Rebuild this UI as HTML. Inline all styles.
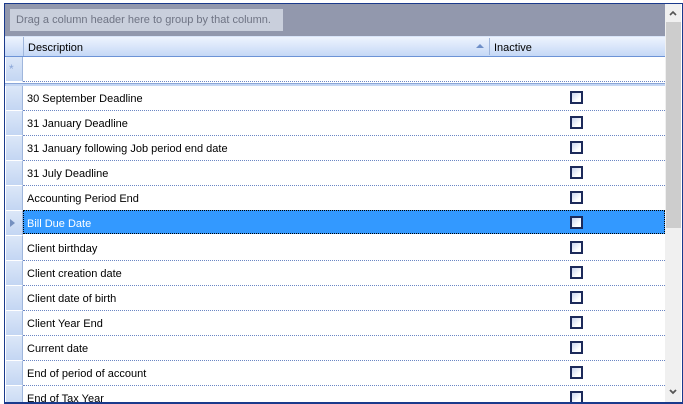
<!DOCTYPE html>
<html><head><style>
*{margin:0;padding:0;box-sizing:border-box}
html,body{width:683px;height:404px;overflow:hidden}
body{background:#fff;position:relative;font-family:"Liberation Sans",sans-serif;font-size:11px}
.a{position:absolute}
.rh{position:absolute;left:5px;width:18px;background:linear-gradient(#dce7f8,#c4d6f3);border-left:1px solid #fff;border-bottom:1px solid #fff;border-right:1px solid #9fb6dc}
.row{position:absolute;left:23px;width:642px;height:25px;border-bottom:1px dotted #6b86c4}
.row span{position:absolute;left:4px;top:7px;color:#000}
.cb{position:absolute;left:547px;top:5px;width:13px;height:13px;border:2px solid #1c2a5a;background:linear-gradient(135deg,#c8d4ee,#fff 70%)}
#clip{position:absolute;left:0;top:0;width:683px;height:402px;overflow:hidden}
</style></head><body>
<div id="clip">
<div class="a" style="left:5px;top:4px;width:660px;height:32px;background:#9298ad"></div>
<div class="a" style="left:10px;top:9px;width:273px;height:22px;background:#c9cfdc;color:#6f7484;padding:5px 0 0 6px">Drag a column header here to group by that column.</div>
<div class="a" style="left:5px;top:36px;width:660px;height:21px;background:linear-gradient(#eef4fe,#c5d8f6);border-bottom:1px solid #6c93d6;border-top:1px solid #d8e4f8"></div>
<div class="a" style="left:23px;top:37px;width:1px;height:19px;background:#9fb6dc"></div>
<div class="a" style="left:28px;top:42px">Description</div>
<div class="a" style="left:476px;top:44px;width:0;height:0;border-left:4px solid transparent;border-right:4px solid transparent;border-bottom:4px solid #6f8fc8"></div>
<div class="a" style="left:489px;top:38px;width:1px;height:17px;background:#9fb6dc"></div>
<div class="a" style="left:494px;top:42px">Inactive</div>
<div class="rh" style="top:57px;height:25px"></div>
<div class="a" style="left:9px;top:62px;color:#8aa6d8;font-size:12px">*</div>
<div class="a" style="left:23px;top:81px;width:642px;height:1px;border-bottom:1px dotted #6b86c4"></div>
<div class="a" style="left:5px;top:83px;width:660px;height:3px;background:#c4d6f3;border-top:1px solid #8aa6d8"></div>
<div id="rows"></div>
<div class="a" style="left:665px;top:4px;width:16px;height:398px;background:#f0f0f0"></div>
<div class="a" style="left:666px;top:22px;width:15px;height:206px;background:#cdcdcd"></div>
<svg class="a" style="left:669px;top:10px" width="8" height="6"><path d="M1 5L4 2L7 5" stroke="#555" stroke-width="1.6" fill="none"/></svg>
<svg class="a" style="left:669px;top:389px" width="8" height="6"><path d="M1 1L4 4L7 1" stroke="#555" stroke-width="1.8" fill="none"/></svg>
</div>
<div class="a" style="left:4px;top:3px;width:679px;height:401px;border:1px solid #1a3a8c;border-bottom:2px solid #1a3a8c"></div>
<script>
var t=["30 September Deadline","31 January Deadline","31 January following Job period end date","31 July Deadline","Accounting Period End","Bill Due Date","Client birthday","Client creation date","Client date of birth","Client Year End","Current date","End of period of account","End of Tax Year"];
var h="";
for(var i=0;i<t.length;i++){var y=86+25*i;var s=i==5;
h+='<div class="rh" style="top:'+y+'px;height:25px"></div>';
if(s)h+='<div class="a" style="left:10px;top:'+(y+8)+'px;width:0;height:0;border-top:4px solid transparent;border-bottom:4px solid transparent;border-left:5px solid #7590c0"></div>';
h+='<div class="row" style="top:'+y+'px;'+(s?'background:#3399ff;border:1px dotted #000;height:24px;top:'+(y-1)+'px;':'')+'"><span style="'+(s?'color:#fff;left:3px;':'')+'">'+t[i]+'</span><div class="cb" style="'+(s?'left:546px;':'')+'"></div></div>';}
document.getElementById("rows").innerHTML=h;
</script>
</body></html>
